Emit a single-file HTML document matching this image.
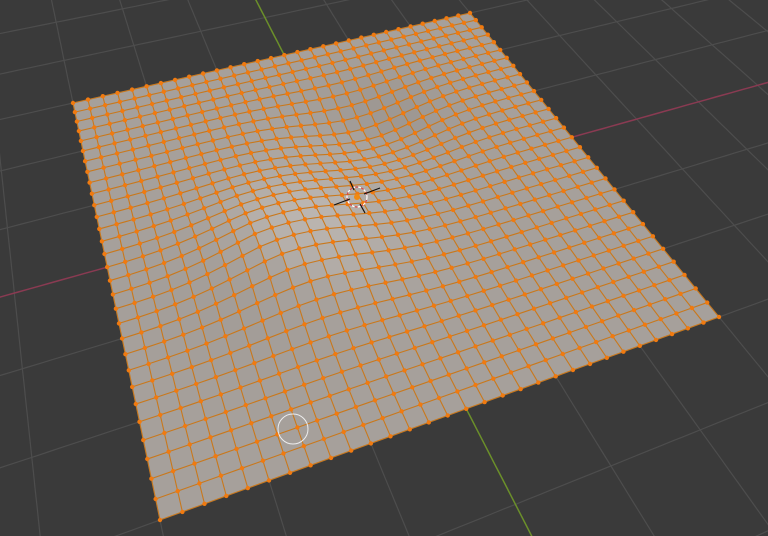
<!DOCTYPE html>
<html><head><meta charset="utf-8"><style>
html,body{margin:0;padding:0;background:#3a3a3a;overflow:hidden;width:768px;height:536px}
svg{display:block;position:absolute;left:0;top:0}
</style></head><body>
<svg id="s" width="768" height="536" viewBox="0 0 768 536" xmlns="http://www.w3.org/2000/svg">
<rect width="768" height="536" fill="#3a3a3a"/>
<g id="bg"></g><g id="mesh"></g>
<g id="cur">
<circle cx="357" cy="197" r="10" fill="none" stroke="#fff" stroke-width="1.2" stroke-dasharray="3 3"/>
<circle cx="357" cy="197" r="10" fill="none" stroke="#d44" stroke-width="1.2" stroke-dasharray="3 3" stroke-dashoffset="3"/>
<line x1="334" y1="205" x2="350" y2="199" stroke="#111" stroke-width="1.2"/>
<line x1="364" y1="194" x2="380" y2="188" stroke="#111" stroke-width="1.2"/>
<line x1="350" y1="181" x2="354" y2="190" stroke="#111" stroke-width="1.2"/>
<line x1="360" y1="204" x2="365" y2="213" stroke="#111" stroke-width="1.2"/>
<circle cx="357" cy="197" r="3" fill="#f08a10"/>
</g>
<circle cx="293" cy="429" r="15" fill="none" stroke="#eee" stroke-width="1"/>
</svg>
<script>
(function(){
var src=[[0,0],[1,0],[1,1],[0,1]],dst=[[73,103],[470,13],[719,317],[160,520]];
var A=[],b=[];
for(var i=0;i<4;i++){var x=src[i][0],y=src[i][1],X=dst[i][0],Y=dst[i][1];
A.push([x,y,1,0,0,0,-x*X,-y*X]);b.push(X);
A.push([0,0,0,x,y,1,-x*Y,-y*Y]);b.push(Y);}
var n=8;for(var c=0;c<n;c++){var p=c;for(var r=c+1;r<n;r++)if(Math.abs(A[r][c])>Math.abs(A[p][c]))p=r;
var t=A[c];A[c]=A[p];A[p]=t;t=b[c];b[c]=b[p];b[p]=t;
for(var r=0;r<n;r++)if(r!=c){var f=A[r][c]/A[c][c];for(var k=c;k<n;k++)A[r][k]-=f*A[c][k];b[r]-=f*b[c];}}
var h=[];for(var i=0;i<n;i++)h.push(b[i]/A[i][i]);
function P(s,t){var w=h[6]*s+h[7]*t+1;return [(h[0]*s+h[1]*t+h[2])/w,(h[3]*s+h[4]*t+h[5])/w,w];}
var NS="http://www.w3.org/2000/svg";
function el(g,tag,at){var e=document.createElementNS(NS,tag);for(var k in at)e.setAttribute(k,at[k]);g.appendChild(e);return e;}
var bg=document.getElementById('bg');
function line(fn,col,wd){var d="",pen=false;for(var q=-60;q<=60;q+=0.02){var p=fn(q);if(p[2]<=0.02||Math.abs(p[0])>3000||Math.abs(p[1])>3000){pen=false;continue;}
d+=(pen?"L":"M")+p[0].toFixed(1)+" "+p[1].toFixed(1);pen=true;}
el(bg,'path',{d:d,fill:'none',stroke:col,'stroke-width':wd});}
for(var k=-90;k<=96;k++){if(k==3)continue;var v=k/6;
line(function(q){return P(v,q)},'#4d4d4d',1.2);
line(function(q){return P(q,v)},'#4d4d4d',1.2);}
line(function(q){return P(q,0.5)},'#8a3a52',1.5);
line(function(q){return P(0.5,q)},'#6b8f2a',1.5);
var N=30,m=document.getElementById('mesh');
function F(s,t){var w=Math.min(1,16*s*(1-s)*t*(1-t)*1.3);
return w*(1.0*Math.exp(-((s-0.32)*(s-0.32)+(t-0.6)*(t-0.6))/0.035)-0.75*Math.exp(-((s-0.6)*(s-0.6)+(t-0.3)*(t-0.3))/0.03));}
var V=[];for(var j=0;j<=N;j++){V[j]=[];for(var i=0;i<=N;i++){var s=i/N,t=j/N,p=P(s,t);V[j][i]=[p[0],p[1]-22*F(s,t)];}}
for(var j=0;j<N;j++)for(var i=0;i<N;i++){var s=(i+.5)/N,t=(j+.5)/N,e=0.01;
var fs=(F(s+e,t)-F(s-e,t))/(2*e),ft=(F(s,t+e)-F(s,t-e))/(2*e);
var br=Math.max(145,Math.min(200,164+1.2*ft-1.5*fs+16*Math.max(0,F(s,t))));
var a=V[j][i],b2=V[j][i+1],c2=V[j+1][i+1],d=V[j+1][i];
el(m,'path',{d:"M"+a+"L"+b2+"L"+c2+"L"+d+"Z",fill:'rgb('+Math.round(br+2)+','+Math.round(br-4)+','+Math.round(br-9)+')',stroke:'rgb('+Math.round(br+2)+','+Math.round(br-4)+','+Math.round(br-9)+')','stroke-width':0.5});}
var dd="";
for(var j=0;j<=N;j++){dd+="M"+V[j][0];for(var i=1;i<=N;i++)dd+="L"+V[j][i];}
for(var i=0;i<=N;i++){dd+="M"+V[0][i];for(var j=1;j<=N;j++)dd+="L"+V[j][i];}
el(m,'path',{d:dd,fill:'none',stroke:'#c9781c','stroke-width':1.1});
for(var j=0;j<=N;j++)for(var i=0;i<=N;i++)el(m,'circle',{cx:V[j][i][0].toFixed(1),cy:V[j][i][1].toFixed(1),r:2.2,fill:'#f07a10'});
})();
</script>
</body></html>
